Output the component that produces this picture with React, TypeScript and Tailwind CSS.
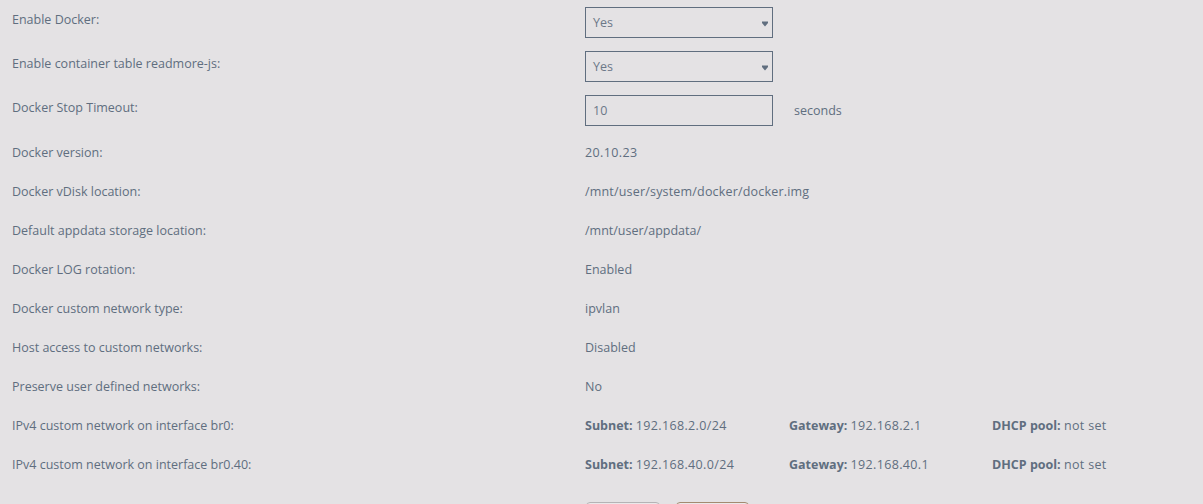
const font = { fontFamily: "'Open Sans', Roboto, sans-serif" };

function Caret() {
  return (
    <svg width="6" height="6" viewBox="0 0 6 6" className="absolute right-[4px] top-[13px]">
      <path d="M0 0.5h6v1.5L3 5.5 0 2z" fill="#606e7f" />
    </svg>
  );
}

function SelectBox({ value }: { value: string }) {
  return (
    <div className="relative flex h-[31px] w-[188px] items-center border border-[#606e7f] pl-[7px] text-[#6c7888]">
      {value}
      <Caret />
    </div>
  );
}

type Row = { label: string; value: React.ReactNode };

function Pair({ k, v, w }: { k: string; v: string; w: string }) {
  return (
    <span className={w}>
      <b className="font-bold">{k}</b> <span className="tracking-[0.35px]">{v}</span>
    </span>
  );
}

const num = (s: string) => <span className="tracking-[0.4px]">{s}</span>;

const textRows: Row[] = [
  { label: "Docker version:", value: num("20.10.23") },
  { label: "Docker vDisk location:", value: <span className="tracking-[0.18px]">/mnt/user/system/docker/docker.img</span> },
  { label: "Default appdata storage location:", value: "/mnt/user/appdata/" },
  { label: "Docker LOG rotation:", value: "Enabled" },
  { label: "Docker custom network type:", value: "ipvlan" },
  { label: "Host access to custom networks:", value: "Disabled" },
  { label: "Preserve user defined networks:", value: "No" },
  {
    label: "IPv4 custom network on interface br0:",
    value: (
      <div className="flex">
        <Pair k="Subnet:" v="192.168.2.0/24" w="w-[204px]" />
        <Pair k="Gateway:" v="192.168.2.1" w="w-[203px]" />
        <Pair k="DHCP pool:" v="not set" w="" />
      </div>
    ),
  },
  {
    label: "IPv4 custom network on interface br0.40:",
    value: (
      <div className="flex">
        <Pair k="Subnet:" v="192.168.40.0/24" w="w-[204px]" />
        <Pair k="Gateway:" v="192.168.40.1" w="w-[203px]" />
        <Pair k="DHCP pool:" v="not set" w="" />
      </div>
    ),
  },
];

export default function App() {
  return (
    <div
      className="h-[504px] w-full overflow-hidden bg-[#e4e2e4] pt-[7px] text-[12.5px] leading-4 text-[#606e7f]"
      style={font}
    >
      <div className="flex h-[44px] items-start">
        <div className="mt-[5px] w-[585px] pl-3">Enable Docker:</div>
        <SelectBox value="Yes" />
      </div>
      <div className="flex h-[44px] items-start">
        <div className="mt-[5px] w-[585px] pl-3">Enable container table readmore-js:</div>
        <SelectBox value="Yes" />
      </div>
      <div className="flex h-[38px] items-start">
        <div className="mt-[5px] w-[585px] pl-3">Docker Stop Timeout:</div>
        <div className="flex items-center">
          <div className="flex h-[31px] w-[188px] items-center border border-[#606e7f] pl-[7px] text-[#6c7888]">
            10
          </div>
          <span className="ml-[21px]">seconds</span>
        </div>
      </div>
      {textRows.map((r) => (
        <div key={r.label} className="flex h-[39px] items-center">
          <div className="w-[585px] pl-3">{r.label}</div>
          <div>{r.value}</div>
        </div>
      ))}
      <div className="mt-[18px] flex gap-[16px] pl-[586px]">
        <button className="h-[30px] w-[74px] rounded-[4px] border border-[#b5b3b5] bg-[#eae8ea]">
          Apply
        </button>
        <button className="h-[30px] w-[73px] rounded-[4px] border border-[#a38a70] bg-[#eae8ea]">
          Done
        </button>
      </div>
    </div>
  );
}
